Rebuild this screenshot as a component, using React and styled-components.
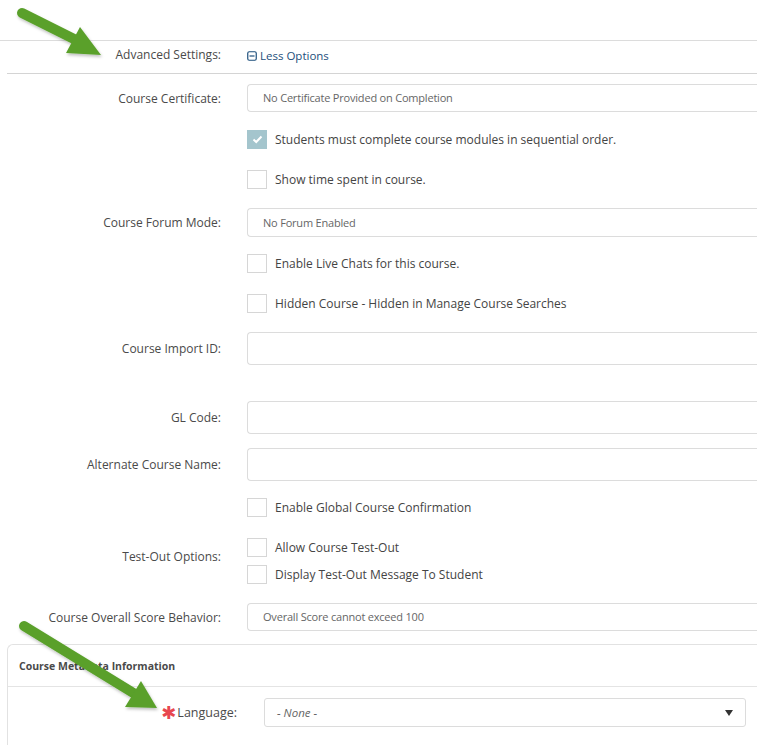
import React from 'react';
import styled, { createGlobalStyle } from 'styled-components';

const GlobalStyle = createGlobalStyle`
  body {
    margin: 0;
    background: #fff;
    font-family: "Open Sans", "Liberation Sans", sans-serif;
    color: #555;
  }
`;

const Page = styled.div`
  position: relative;
  width: 757px;
  height: 745px;
  overflow: hidden;
  padding-top: 40px;
  box-sizing: border-box;
`;

const TopRule = styled.div`
  border-top: 1px solid #dcdcdc;
  width: 800px;
`;

const Section = styled.div`
  padding-left: 7px;
`;

const Row = styled.div`
  display: grid;
  grid-template-columns: 214px 800px;
  column-gap: 26px;
  align-items: center;
  margin-top: ${props => props.top || 0}px;
`;

const AdvancedRow = styled(Row)`
  height: 33px;
  padding-bottom: 5px;
  box-sizing: border-box;
  border-bottom: 1px solid #d4d4d4;
  width: 900px;
`;

const Label = styled.div`
  text-align: right;
  font-size: 12px;
  color: #4a4a4a;
  white-space: nowrap;
  margin-bottom: ${props => props.lift || 0}px;
`;

const Link = styled.a`
  display: inline-flex;
  align-items: center;
  gap: 3px;
  color: #1d4f7c;
  font-size: 11.5px;
  text-decoration: none;
  cursor: pointer;
`;

const Field = styled.div`
  height: ${props => props.h || 28}px;
  border: 1px solid #dcdcdc;
  border-right: none;
  border-radius: 4px 0 0 4px;
  box-sizing: border-box;
  display: flex;
  align-items: center;
  padding-left: 15px;
  padding-bottom: 1px;
  font-size: 11px;
  color: #666;
  letter-spacing: -0.2px;
`;

const CheckLine = styled.label`
  display: flex;
  align-items: center;
  gap: 8px;
  font-size: 12px;
  font-weight: 500;
  color: #444;
  white-space: nowrap;
`;

const Box = styled.span`
  width: 20px;
  height: 19px;
  box-sizing: border-box;
  border: 1px solid ${props => (props.checked ? '#a4c5cd' : '#d6d6d6')};
  background: ${props => (props.checked ? '#a4c5cd' : '#fff')};
  display: inline-flex;
  align-items: center;
  justify-content: center;
  flex: none;
`;

const CheckStack = styled.div`
  display: flex;
  flex-direction: column;
  gap: 8px;
`;

const Panel = styled.div`
  margin-top: 13px;
  border: 1px solid #e2e2e2;
  border-right: none;
  border-radius: 6px 0 0 0;
  width: 800px;
  height: 120px;
`;

const PanelHeader = styled.div`
  height: 41px;
  border-bottom: 1px solid #e4e4e4;
  display: flex;
  align-items: center;
  padding-left: 11px;
  font-size: 10.5px;
  font-weight: 700;
  color: #4a4a4a;
`;

const PanelRow = styled.div`
  display: grid;
  grid-template-columns: 229px 482px;
  column-gap: 27px;
  align-items: center;
  margin-top: 11px;
`;

const Required = styled.span`
  color: #e8474f;
  font-family: "DejaVu Sans", sans-serif;
  font-size: 18px;
  line-height: 14px;
  margin-right: 1px;
`;

const LangLabel = styled(Label)`
  font-size: 12.5px;
  display: flex;
  justify-content: flex-end;
  align-items: center;
`;

const Select = styled.div`
  height: 29px;
  border: 1px solid #dcdcdc;
  border-radius: 3px;
  box-sizing: border-box;
  display: flex;
  align-items: center;
  justify-content: space-between;
  padding: 0 12px 0 12px;
  font-size: 11.5px;
  font-style: italic;
  color: #666;
`;

const Arrow = styled.svg`
  position: absolute;
  left: 0;
  top: 0;
  pointer-events: none;
  overflow: visible;
`;

function Check({ checked, children }) {
  return (
    <CheckLine>
      <Box checked={checked}>
        {checked && (
          <svg width="11" height="9" viewBox="0 0 11 9">
            <path d="M1.5 4.5 L4.2 7 L9.5 1.5" fill="none" stroke="#fff" strokeWidth="2" />
          </svg>
        )}
      </Box>
      {children}
    </CheckLine>
  );
}

function GreenArrow({ id, x1, y1, x2, y2, head }) {
  return (
    <Arrow width="1" height="1">
      <defs>
        <filter id={id} x="-20%" y="-20%" width="140%" height="140%">
          <feDropShadow dx="1" dy="2" stdDeviation="1.5" floodColor="#000" floodOpacity="0.25" />
        </filter>
      </defs>
      <g filter={`url(#${id})`}>
        <line x1={x1} y1={y1} x2={x2} y2={y2} stroke="#5aa02c" strokeWidth="10" strokeLinecap="round" />
        <polygon points={head} fill="#5aa02c" />
      </g>
    </Arrow>
  );
}

export default function App() {
  return (
    <Page>
      <GlobalStyle />
      <TopRule />
      <Section>
        <AdvancedRow>
          <Label>Advanced Settings:</Label>
          <div>
            <Link>
              <svg width="10" height="10" viewBox="0 0 10 10">
                <rect x="0.75" y="0.75" width="8.5" height="8.5" rx="1.5" fill="none" stroke="#1d4f7c" strokeWidth="1.2" />
                <line x1="2.5" y1="5" x2="7.5" y2="5" stroke="#1d4f7c" strokeWidth="1.2" />
              </svg>
              Less Options
            </Link>
          </div>
        </AdvancedRow>

        <Row top={10}>
          <Label>Course Certificate:</Label>
          <Field>No Certificate Provided on Completion</Field>
        </Row>
        <Row top={18}>
          <span />
          <Check checked>Students must complete course modules in sequential order.</Check>
        </Row>
        <Row top={21}>
          <span />
          <Check>Show time spent in course.</Check>
        </Row>
        <Row top={19}>
          <Label>Course Forum Mode:</Label>
          <Field h={29}>No Forum Enabled</Field>
        </Row>
        <Row top={17}>
          <span />
          <Check>Enable Live Chats for this course.</Check>
        </Row>
        <Row top={21}>
          <span />
          <Check>Hidden Course - Hidden in Manage Course Searches</Check>
        </Row>
        <Row top={19}>
          <Label>Course Import ID:</Label>
          <Field h={33} />
        </Row>
        <Row top={36}>
          <Label>GL Code:</Label>
          <Field h={33} />
        </Row>
        <Row top={14}>
          <Label>Alternate Course Name:</Label>
          <Field h={33} />
        </Row>
        <Row top={17}>
          <span />
          <Check>Enable Global Course Confirmation</Check>
        </Row>
        <Row top={21}>
          <Label lift={10}>Test-Out Options:</Label>
          <CheckStack>
            <Check>Allow Course Test-Out</Check>
            <Check>Display Test-Out Message To Student</Check>
          </CheckStack>
        </Row>
        <Row top={19}>
          <Label>Course Overall Score Behavior:</Label>
          <Field>Overall Score cannot exceed 100</Field>
        </Row>

        <Panel>
          <PanelHeader>Course Metadata Information</PanelHeader>
          <PanelRow>
            <LangLabel>
              <Required>✱</Required>Language:
            </LangLabel>
            <Select>
              <span>- None -</span>
              <svg width="8" height="6" viewBox="0 0 8 6">
                <polygon points="0,0 8,0 4,6" fill="#333" />
              </svg>
            </Select>
          </PanelRow>
        </Panel>
      </Section>

      <GreenArrow id="a1" x1={22} y1={13} x2={78} y2={41} head="80,27 101,55 66,53" />
      <GreenArrow id="a2" x1={24} y1={626} x2={135} y2={694} head="141,681 157,708 125,707" />
    </Page>
  );
}
